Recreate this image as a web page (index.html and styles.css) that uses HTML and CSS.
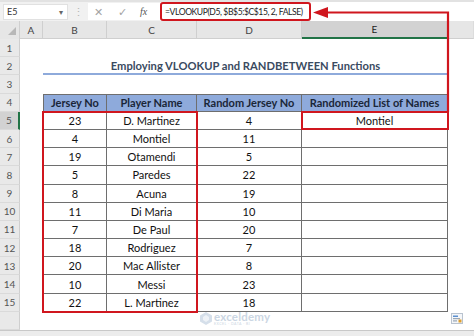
FILE: index.html
```html
<!DOCTYPE html>
<html>
<head>
<meta charset="utf-8">
<link rel="stylesheet" href="styles.css">
</head>
<body>
<div class="app">
  <div class="fbar">
    <div class="namebox"><span class="nb-text">E5</span><span class="dd">▾</span></div>
    <div class="sep">⋮</div>
    <div class="btns"><span class="x">✕</span><span class="ok">✓</span><span class="fx">fx</span></div>
    <div class="formula"><span>=VLOOKUP(D5, $B$5:$C$15, 2, FALSE)</span></div>
  </div>

  <div class="sheet">
    <div class="row hdr">
      <div class="corner"><svg width="10" height="10" viewBox="0 0 10 10"><polygon points="9,1 9,9 1,9" fill="#b8b8b8"/></svg></div>
      <div class="ch">A</div><div class="ch">B</div><div class="ch">C</div><div class="ch">D</div><div class="ch sel">E</div><div class="ch last"></div>
    </div>

    <div class="row"><div class="rh">1</div><div></div><div></div><div></div><div></div><div></div><div></div></div>
    <div class="row"><div class="rh">2</div><div></div><div class="title">Employing VLOOKUP and RANDBETWEEN Functions</div><div></div></div>
    <div class="row"><div class="rh">3</div><div></div><div></div><div></div><div></div><div></div><div></div></div>
    <div class="row"><div class="rh">4</div><div></div><div class="t th first">Jersey No</div><div class="t th">Player Name</div><div class="t th">Random Jersey No</div><div class="t th">Randomized List of Names</div><div></div></div>
    <div class="row"><div class="rh sel">5</div><div></div><div class="t first">23</div><div class="t">D. Martinez</div><div class="t">4</div><div class="t">Montiel</div><div></div></div>
    <div class="row"><div class="rh">6</div><div></div><div class="t first">4</div><div class="t">Montiel</div><div class="t">11</div><div class="t"></div><div></div></div>
    <div class="row"><div class="rh">7</div><div></div><div class="t first">19</div><div class="t">Otamendi</div><div class="t">5</div><div class="t"></div><div></div></div>
    <div class="row"><div class="rh">8</div><div></div><div class="t first">5</div><div class="t">Paredes</div><div class="t">22</div><div class="t"></div><div></div></div>
    <div class="row"><div class="rh">9</div><div></div><div class="t first">8</div><div class="t">Acuna</div><div class="t">19</div><div class="t"></div><div></div></div>
    <div class="row"><div class="rh">10</div><div></div><div class="t first">11</div><div class="t">Di Maria</div><div class="t">10</div><div class="t"></div><div></div></div>
    <div class="row"><div class="rh">11</div><div></div><div class="t first">7</div><div class="t">De Paul</div><div class="t">20</div><div class="t"></div><div></div></div>
    <div class="row"><div class="rh">12</div><div></div><div class="t first">18</div><div class="t">Rodriguez</div><div class="t">7</div><div class="t"></div><div></div></div>
    <div class="row"><div class="rh">13</div><div></div><div class="t first">20</div><div class="t">Mac Allister</div><div class="t">8</div><div class="t"></div><div></div></div>
    <div class="row"><div class="rh">14</div><div></div><div class="t first">10</div><div class="t">Messi</div><div class="t">23</div><div class="t"></div><div></div></div>
    <div class="row"><div class="rh">15</div><div></div><div class="t first">22</div><div class="t">L. Martinez</div><div class="t">18</div><div class="t"></div><div></div></div>
    <div class="row"><div class="rh"></div><div></div><div></div><div></div><div></div><div></div><div></div></div>
  </div>
  <div class="bottombar"></div>

  <div class="box box-formula"></div>
  <div class="box box-range"></div>
  <div class="box box-e5"></div>
  <svg class="arrow" width="474" height="336" viewBox="0 0 474 336">
    <polyline points="448,112 448,12.5 326,12.5" fill="none" stroke="#d0161e" stroke-width="2.2"/>
    <polygon points="313,12.5 328,7 328,18" fill="#d0161e"/>
  </svg>

  <div class="watermark">
    <svg class="wm-logo" width="12" height="13" viewBox="0 0 12 13"><polygon points="6,0 12,3.5 12,9.5 6,13 0,9.5 0,3.5" fill="#d5dfea"/><polygon points="6,3 9,5 9,8 6,10 3,8 3,5" fill="#eef2f7"/></svg>
    <div class="wm-text"><span class="wm-name">exceldemy</span><span class="wm-sub">EXCEL · DATA · BI</span></div>
  </div>
  <svg class="qa" width="12" height="11" viewBox="0 0 12 11">
    <rect x="0.5" y="0.5" width="11" height="10" fill="#f4f6f9" stroke="#b9c3cf"/>
    <rect x="2" y="2.5" width="5" height="1.5" fill="#5b8fd0"/>
    <rect x="2" y="5" width="7" height="1.2" fill="#9aa7b5"/>
    <rect x="2" y="7.3" width="4" height="1.2" fill="#9aa7b5"/>
    <rect x="7.5" y="6.5" width="3" height="3" fill="#e0a030"/>
  </svg>
</div>
</body>
</html>
```

FILE: styles.css
```css
* { box-sizing: border-box; }
html, body { margin: 0; padding: 0; background: #ffffff; }
body { font-family: Lato, "Open Sans", sans-serif; }

.app {
  position: relative;
  width: 474px;
  height: 336px;
  overflow: hidden;
  background: #ffffff;
}

/* formula bar */
.fbar {
  height: 21px;
  display: flex;
  align-items: center;
  background: #f1f1f1;
  border-top: 2px solid #e2e2e2;
}
.namebox {
  margin-left: 3px;
  width: 65px;
  height: 16px;
  background: #ffffff;
  border: 1px solid #e1e1e1;
  display: flex;
  align-items: center;
  justify-content: space-between;
  padding: 0 4px 0 3px;
  font-size: 9px;
  color: #333;
}
.dd { font-size: 8px; color: #666; }
.sep {
  width: 20px;
  text-align: center;
  color: #b5b5b5;
  font-size: 11px;
}
.btns {
  width: 72px;
  height: 17px;
  background: #ffffff;
  display: flex;
  align-items: center;
  padding-left: 6px;
  color: #a3a3a3;
  font-size: 11px;
}
.btns .x { width: 24px; }
.btns .ok { width: 22px; }
.btns .fx { font-family: "Liberation Serif", serif; font-style: italic; font-size: 10px; color: #555; }
.formula {
  flex: 1;
  height: 19px;
  background: #ffffff;
  display: flex;
  align-items: center;
  padding-left: 5px;
  font-size: 8.6px;
  letter-spacing: -0.42px;
  color: #222;
}

/* sheet */
.sheet { display: flex; flex-direction: column; }
.row {
  display: grid;
  grid-template-columns: 20px 23px 64px 90px 105px 146px 26px;
  height: 18.2px;
}
.row.hdr { height: 18px; background: #e6e6e6; }
.corner {
  display: flex;
  align-items: flex-end;
  justify-content: flex-end;
  padding: 0 2px 3px 0;
  border-right: 1px solid #cfcfcf;
}
.ch {
  display: flex;
  align-items: center;
  justify-content: center;
  font-size: 10px;
  color: #444;
  border-right: 1px solid #cfcfcf;
  border-bottom: 1px solid #cfcfcf;
}
.ch.sel { background: #d2d2d2; border-bottom: 2px solid #217346; color: #222; }
.ch.last { border-right: 1px solid #dcdcdc; }

.rh {
  background: #e9e9e9;
  border-right: 1px solid #cfcfcf;
  border-bottom: 1px solid #dadada;
  display: flex;
  align-items: center;
  justify-content: center;
  font-size: 10px;
  color: #555;
}
.rh.sel { background: #d2d2d2; border-right: 2px solid #217346; }

.title {
  grid-column: 3 / 7;
  display: flex;
  align-items: center;
  justify-content: center;
  font-weight: 700;
  font-size: 11.2px;
  color: #3a4a5f;
  border-bottom: 2px solid #8eaadb;
}

.t {
  display: flex;
  align-items: center;
  justify-content: center;
  font-size: 11px;
  color: #111;
  border-right: 1px solid #6e6e6e;
  border-bottom: 1px solid #6e6e6e;
}
.t.first { border-left: 1px solid #6e6e6e; }
.t.th {
  background: #8eaadb;
  font-weight: 700;
  border-top: 1px solid #6e6e6e;
  color: #1a2638;
}

.bottombar {
  height: 6px;
  background: #ececec;
  border-top: 1px solid #c8c8c8;
}

/* overlays */
.box { position: absolute; border: 2.5px solid #d0161e; }
.box-formula { left: 160px; top: 2px; width: 151px; height: 19px; border-radius: 3px; }
.box-range { left: 42px; top: 110.5px; width: 156px; height: 202.5px; }
.box-e5 { left: 301px; top: 110.5px; width: 148px; height: 19.5px; }
.arrow { position: absolute; left: 0; top: 0; pointer-events: none; }

.watermark {
  position: absolute;
  left: 200px;
  top: 311px;
  display: flex;
  align-items: center;
  gap: 2px;
}
.wm-text { display: flex; flex-direction: column; line-height: 1; }
.wm-name { font-size: 11.5px; font-weight: 700; color: #cbd6e3; letter-spacing: 0.2px; }
.wm-sub { font-size: 3.5px; color: #cbd6e3; letter-spacing: 0.5px; }
.qa { position: absolute; left: 451px; top: 313px; }
```
